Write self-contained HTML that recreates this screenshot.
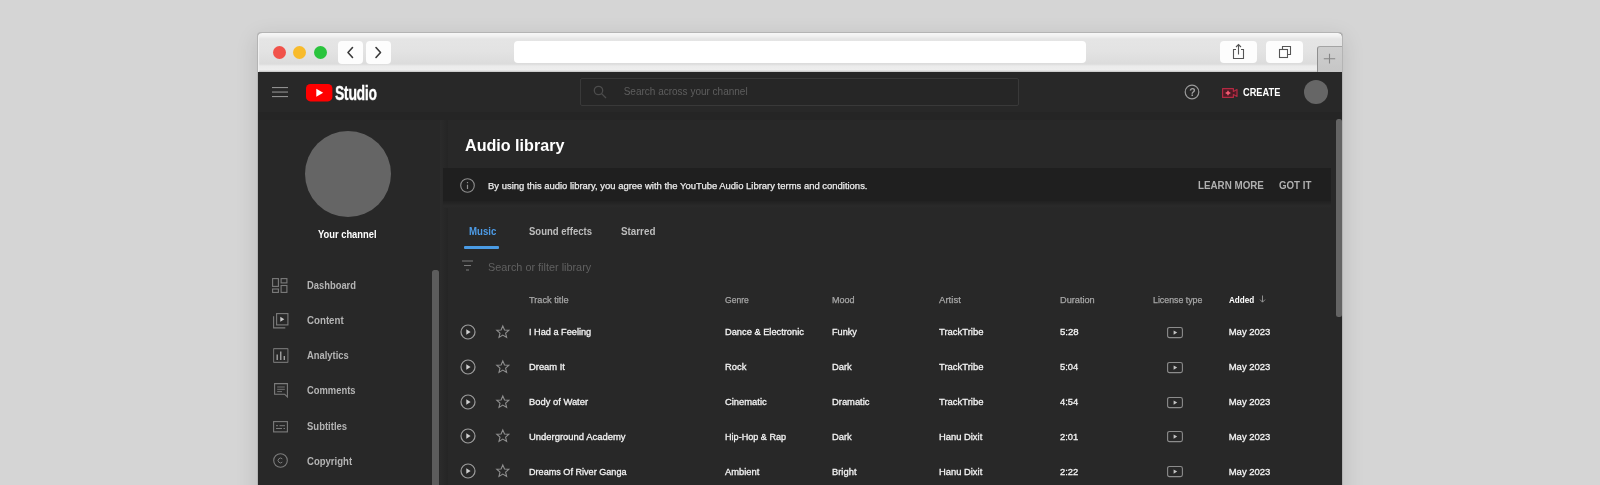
<!DOCTYPE html>
<html lang="en">
<head>
<meta charset="utf-8">
<title>Audio library - YouTube Studio</title>
<style>
html,body{margin:0;padding:0;}
body{width:1600px;height:485px;overflow:hidden;background:#d5d5d5;font-family:"Liberation Sans",sans-serif;position:relative;}
.a,.t,svg{position:absolute;}
.t{white-space:nowrap;line-height:1;transform-origin:0 50%;}
svg{overflow:visible;}
.nb{background:#fdfdfd;border-radius:4px;}
.lt{top:45.500px;width:13px;height:13px;border-radius:50%;}
</style>
</head>
<body>

<!-- window -->
<div class="a" style="left:256.600px;top:31.700px;width:1086.600px;height:473px;background:#b4b4b4;border-radius:4px 4px 0 0;box-shadow:0 6px 22px rgba(0,0,0,0.13);"></div>
<div class="a" style="left:258px;top:33px;width:1084px;height:452px;background:#282828;border-radius:4px 4px 0 0;"></div>
<!-- browser chrome -->
<div class="a" style="left:258px;top:33px;width:1084px;height:38.700px;background:linear-gradient(#f7f7f7 0,#f1f1f1 3px,#e5e5e5 6px,#e3e3e3 18px,#dcdcdc 31px,#ebebeb 33px,#eeeeee 37px,#c8c8c8 38.700px);border-radius:4px 4px 0 0;box-shadow:inset 2px 0 1px -1px #f2f2f2;"></div>
<div class="a lt" style="left:273px;background:#f1524a;"></div>
<div class="a lt" style="left:292.500px;background:#f8bb2c;"></div>
<div class="a lt" style="left:313.500px;background:#2ac43d;"></div>
<div class="a nb" style="left:338px;top:41px;width:25px;height:23px;"></div>
<div class="a nb" style="left:366px;top:41px;width:25px;height:23px;"></div>
<svg style="left:338px;top:41px;" width="53" height="23" viewBox="0 0 53 23" fill="none" stroke="#3a3a3a" stroke-width="1.6" stroke-linecap="round" stroke-linejoin="round"><path d="M14.5 6.5 L10 11.5 L14.5 16.5"/><path d="M38 6.5 L42.5 11.5 L38 16.5"/></svg>
<div class="a" style="left:513.5px;top:41px;width:572.5px;height:22px;background:#fff;border-radius:4px;"></div>
<div class="a nb" style="left:1220px;top:41px;width:37px;height:22px;"></div>
<div class="a nb" style="left:1266px;top:41px;width:37px;height:22px;"></div>
<svg style="left:1220px;top:41px;" width="83" height="22" viewBox="0 0 83 22" fill="none" stroke="#555" stroke-width="1.1"><path d="M16 8.5 H13.5 V17.5 H23.5 V8.5 H21"/><path d="M18.5 13.5 V3.5 M16 6 L18.5 3.5 L21 6"/><rect x="59.5" y="8.5" width="8" height="8"/><path d="M62.5 8.5 V5.5 H70.5 V13.5 H67.5"/></svg>
<div class="a" style="left:1317px;top:46px;width:25px;height:25.700px;background:linear-gradient(#cecece,#c6c6c6);border-left:1px solid #8f8f8f;border-top:1px solid #a4a4a4;border-radius:3px 0 0 0;box-sizing:border-box;"></div>
<svg style="left:1317px;top:46px;" width="25" height="25" viewBox="0 0 25 25" fill="none" stroke="#858585" stroke-width="1.100"><path d="M12.500 7.800 V17.600 M6.800 12.700 H18.200"/></svg>
<!-- app regions -->
<div class="a" style="left:258px;top:71.700px;width:1084px;height:40.300px;background:#282828;"></div>
<div class="a" style="left:258px;top:112px;width:185px;height:373px;background:#282828;"></div>
<div class="a" style="left:443px;top:112px;width:899px;height:373px;background:#282828;"></div>
<div class="a" style="left:258px;top:112px;width:1084px;height:8px;background:#252525;"></div>
<div class="a" style="left:440px;top:120px;width:8px;height:365px;background:linear-gradient(90deg,#2b2b2b,#252525);"></div>
<div class="a" style="left:442.500px;top:167.800px;width:888.500px;height:33px;background:#1f1f1f;"></div>
<div class="a" style="left:442.500px;top:200.800px;width:888.500px;height:7px;background:linear-gradient(#212121,#272727 50%,#2a2a2a 70%,#282828);"></div>
<!-- scrollbars -->
<div class="a" style="left:432px;top:270.300px;width:6.800px;height:215px;background:#5c5c5c;border-radius:2.500px 2.500px 0 0;"></div>
<div class="a" style="left:1336.300px;top:119px;width:5.700px;height:198px;background:#646464;border-radius:2.500px;"></div>
<!-- header -->
<svg style="left:272px;top:86px;" width="16" height="12" viewBox="0 0 16 12" fill="#909090"><rect x="0" y="1" width="16" height="1.1"/><rect x="0" y="5.5" width="16" height="1.1"/><rect x="0" y="10" width="16" height="1.1"/></svg>
<svg style="left:305.7px;top:83.5px;" width="26.4" height="17.4" viewBox="0 0 26.4 17.4"><rect x="0" y="0" width="26.4" height="17.4" rx="4.5" ry="4.5" fill="#ff0000"/><path d="M10.3 4.700 L17.2 8.700 L10.3 12.700 Z" fill="#fff"/></svg>
<div class="t" style="left:335px;top:82.5px;font-size:20.5px;font-weight:bold;color:#fff;transform-origin:0 0;transform:scaleX(0.675);letter-spacing:-0.3px;-webkit-text-stroke:0.4px #fff;will-change:transform;">Studio</div>
<div class="a" style="left:580px;top:78px;width:439px;height:28px;border:1px solid #393939;box-sizing:border-box;border-radius:2px;background:#262626;"></div>
<svg style="left:593px;top:85px;" width="14" height="14" viewBox="0 0 14 14" fill="none" stroke="#4c4c4c" stroke-width="1.3"><circle cx="5.5" cy="5.5" r="4.2"/><path d="M8.6 8.600 L13 13"/></svg>
<svg style="left:1184.3px;top:84px;" width="16" height="16" viewBox="0 0 16 16" fill="none" stroke="#9a9a9a" stroke-width="1.2"><circle cx="8" cy="8" r="6.800"/></svg>
<svg style="left:1222px;top:87.5px;" width="16" height="10" viewBox="0 0 16 10"><path d="M0.6 0.600 H11.4 V3.500 L15 1.500 V8.500 L11.4 6.500 V9.400 H0.6 Z" fill="#4f1a25" stroke="#b32a43" stroke-width="1.2" stroke-linejoin="round"/><path d="M6 2.700 V7.300 M3.700 5 H8.300" stroke="#ff6078" stroke-width="1.4" fill="none"/></svg>
<div class="a" style="left:1303.700px;top:79.600px;width:24.500px;height:24.500px;border-radius:50%;background:#666666;"></div>
<!-- sidebar -->
<div class="a" style="left:304.5px;top:130.5px;width:86px;height:86px;border-radius:50%;background:#656565;"></div>
<!-- sidebar icons -->
<svg style="left:271.8px;top:278.3px;" width="15.500" height="15" viewBox="0 0 15.500 15" fill="none" stroke="#7c7c7c" stroke-width="1.1"><rect x="0.600" y="0.600" width="5.800" height="7.800"/><rect x="9.100" y="0.600" width="5.800" height="4.300"/><rect x="0.600" y="11" width="5.800" height="3.400"/><rect x="9.100" y="7.500" width="5.800" height="6.900"/></svg>
<svg style="left:272.700px;top:312.500px;" width="15.500" height="15.500" viewBox="0 0 15.500 15.500" fill="none" stroke="#7c7c7c" stroke-width="1.1"><rect x="3.600" y="0.600" width="11.300" height="11.300"/><path d="M0.600 3.200 V14.900 H12.300"/><path d="M7.300 3.800 L11.300 6.300 L7.300 8.800 Z" fill="#c8c8c8" stroke="none"/></svg>
<svg style="left:272.500px;top:347.500px;" width="15.500" height="15" viewBox="0 0 15.500 15" fill="none" stroke="#7c7c7c" stroke-width="1.1"><path d="M0.600 0.600 H14.900 M0.600 14.400 H14.900 M0.600 0.600 V14.400 M14.900 0.600 V14.400" stroke-opacity="0.850"/><path d="M4.200 12 V6.500 M7.750 12 V3.500 M11.300 12 V8" stroke="#a0a0a0" stroke-width="1.400"/></svg>
<svg style="left:273.500px;top:383px;" width="14" height="15" viewBox="0 0 14 15" fill="none" stroke="#7c7c7c" stroke-width="1.1"><path d="M0.600 0.600 H13.400 V14 L10.600 11.200 H0.600 Z"/><path d="M3.200 4 H10.800 M3.200 6.300 H10.800 M3.200 8.600 H8" stroke-width="0.900"/></svg>
<svg style="left:273px;top:420.500px;" width="15" height="11.500" viewBox="0 0 15 11.500" fill="none" stroke="#7c7c7c" stroke-width="1.1"><rect x="0.600" y="0.600" width="13.800" height="10.300"/><path d="M3 4.700 H5 M6.500 4.700 H12 M3 7.500 H9 M10.500 7.500 H12" stroke-width="1"/></svg>
<svg style="left:273px;top:453px;" width="15" height="15" viewBox="0 0 15 15" fill="none" stroke="#7c7c7c" stroke-width="1.1"><circle cx="7.500" cy="7.500" r="6.800"/><path d="M9.300 5.900 A2.400 2.400 0 1 0 9.300 9.100" stroke-width="1"/></svg>
<!-- banner info icon -->
<svg style="left:459.500px;top:177.500px;" width="15" height="15" viewBox="0 0 15 15" fill="none" stroke="#8e8e8e" stroke-width="1.1"><circle cx="7.500" cy="7.500" r="6.800"/><path d="M7.500 6.700 V11" stroke-width="1.200"/><path d="M7.500 4 V5.200" stroke-width="1.200"/></svg>
<!-- tab underline -->
<div class="a" style="left:464px;top:246.300px;width:35px;height:3.200px;background:#4a9be4;border-radius:1px;"></div>
<!-- filter icon -->
<svg style="left:462px;top:260.300px;" width="11" height="12" viewBox="0 0 11 12" fill="none" stroke="#7a7a7a" stroke-width="1.100"><path d="M0 1 H11 M2 5.500 H9 M4 10 H7"/></svg>
<!-- sort arrow -->
<svg style="left:1259px;top:295px;" width="7" height="8" viewBox="0 0 7 8" fill="none" stroke="#9a9a9a" stroke-width="0.900"><path d="M3.500 0.500 V7 M1 4.600 L3.500 7.200 L6 4.600"/></svg>
<svg style="left:459.600px;top:324.0px;" width="16" height="16" viewBox="0 0 16 16" fill="none" stroke="#9c9c9c" stroke-width="1.2"><circle cx="8" cy="8" r="7"/><path d="M6.300 5.200 L10.600 8 L6.300 10.800 Z" fill="#d0d0d0" stroke="none"/></svg>
<svg style="left:495.8px;top:324.8px;" width="13.600" height="13.200" viewBox="0 0 15 14.500" fill="none" stroke="#8e8e8e" stroke-width="1.2" stroke-linejoin="miter"><path d="M7.500 1 L9.400 5.400 L14.200 5.800 L10.600 9 L11.700 13.600 L7.500 11.100 L3.300 13.600 L4.400 9 L0.800 5.800 L5.600 5.400 Z"/></svg>
<svg style="left:1167px;top:326.7px;" width="16" height="11.200" viewBox="0 0 16 12" preserveAspectRatio="none" fill="none" stroke="#8c8c8c" stroke-width="1.1"><rect x="0.600" y="0.600" width="14.800" height="10.800" rx="2" ry="2"/><path d="M6.600 3.800 L10.200 6 L6.600 8.200 Z" fill="#c4c4c4" stroke="none"/></svg>
<svg style="left:459.600px;top:359.0px;" width="16" height="16" viewBox="0 0 16 16" fill="none" stroke="#9c9c9c" stroke-width="1.2"><circle cx="8" cy="8" r="7"/><path d="M6.300 5.200 L10.600 8 L6.300 10.800 Z" fill="#d0d0d0" stroke="none"/></svg>
<svg style="left:495.8px;top:359.8px;" width="13.600" height="13.200" viewBox="0 0 15 14.500" fill="none" stroke="#8e8e8e" stroke-width="1.2" stroke-linejoin="miter"><path d="M7.500 1 L9.400 5.400 L14.200 5.800 L10.600 9 L11.700 13.600 L7.500 11.100 L3.300 13.600 L4.400 9 L0.800 5.800 L5.600 5.400 Z"/></svg>
<svg style="left:1167px;top:361.7px;" width="16" height="11.200" viewBox="0 0 16 12" preserveAspectRatio="none" fill="none" stroke="#8c8c8c" stroke-width="1.1"><rect x="0.600" y="0.600" width="14.800" height="10.800" rx="2" ry="2"/><path d="M6.600 3.800 L10.200 6 L6.600 8.200 Z" fill="#c4c4c4" stroke="none"/></svg>
<svg style="left:459.600px;top:393.9px;" width="16" height="16" viewBox="0 0 16 16" fill="none" stroke="#9c9c9c" stroke-width="1.2"><circle cx="8" cy="8" r="7"/><path d="M6.300 5.200 L10.600 8 L6.300 10.800 Z" fill="#d0d0d0" stroke="none"/></svg>
<svg style="left:495.8px;top:394.7px;" width="13.600" height="13.200" viewBox="0 0 15 14.500" fill="none" stroke="#8e8e8e" stroke-width="1.2" stroke-linejoin="miter"><path d="M7.500 1 L9.400 5.400 L14.200 5.800 L10.600 9 L11.700 13.600 L7.500 11.100 L3.300 13.600 L4.400 9 L0.800 5.800 L5.600 5.400 Z"/></svg>
<svg style="left:1167px;top:396.6px;" width="16" height="11.200" viewBox="0 0 16 12" preserveAspectRatio="none" fill="none" stroke="#8c8c8c" stroke-width="1.1"><rect x="0.600" y="0.600" width="14.800" height="10.800" rx="2" ry="2"/><path d="M6.600 3.800 L10.200 6 L6.600 8.200 Z" fill="#c4c4c4" stroke="none"/></svg>
<svg style="left:459.600px;top:428.0px;" width="16" height="16" viewBox="0 0 16 16" fill="none" stroke="#9c9c9c" stroke-width="1.2"><circle cx="8" cy="8" r="7"/><path d="M6.300 5.200 L10.600 8 L6.300 10.800 Z" fill="#d0d0d0" stroke="none"/></svg>
<svg style="left:495.8px;top:428.8px;" width="13.600" height="13.200" viewBox="0 0 15 14.500" fill="none" stroke="#8e8e8e" stroke-width="1.2" stroke-linejoin="miter"><path d="M7.500 1 L9.400 5.400 L14.200 5.800 L10.600 9 L11.700 13.600 L7.500 11.100 L3.300 13.600 L4.400 9 L0.800 5.800 L5.600 5.400 Z"/></svg>
<svg style="left:1167px;top:430.7px;" width="16" height="11.200" viewBox="0 0 16 12" preserveAspectRatio="none" fill="none" stroke="#8c8c8c" stroke-width="1.1"><rect x="0.600" y="0.600" width="14.800" height="10.800" rx="2" ry="2"/><path d="M6.600 3.800 L10.200 6 L6.600 8.200 Z" fill="#c4c4c4" stroke="none"/></svg>
<svg style="left:459.600px;top:463.3px;" width="16" height="16" viewBox="0 0 16 16" fill="none" stroke="#9c9c9c" stroke-width="1.2"><circle cx="8" cy="8" r="7"/><path d="M6.300 5.200 L10.600 8 L6.300 10.800 Z" fill="#d0d0d0" stroke="none"/></svg>
<svg style="left:495.8px;top:464.1px;" width="13.600" height="13.200" viewBox="0 0 15 14.500" fill="none" stroke="#8e8e8e" stroke-width="1.2" stroke-linejoin="miter"><path d="M7.500 1 L9.400 5.400 L14.200 5.800 L10.600 9 L11.700 13.600 L7.500 11.100 L3.300 13.600 L4.400 9 L0.800 5.800 L5.600 5.400 Z"/></svg>
<svg style="left:1167px;top:466.0px;" width="16" height="11.200" viewBox="0 0 16 12" preserveAspectRatio="none" fill="none" stroke="#8c8c8c" stroke-width="1.1"><rect x="0.600" y="0.600" width="14.800" height="10.800" rx="2" ry="2"/><path d="M6.600 3.800 L10.200 6 L6.600 8.200 Z" fill="#c4c4c4" stroke="none"/></svg>

<div id="txt" style="position:absolute;left:0;top:0;width:1600px;height:485px;will-change:transform;">
<div class="t" id="t0" style="left:623.70px;top:87.01px;font-size:10px;color:#5e5e5e;">Search across your channel</div>
<div class="t" id="t1" style="left:1243.00px;top:88.01px;font-size:10.2px;color:#ffffff;font-weight:bold;transform:scaleX(0.9066);">CREATE</div>
<div class="t" id="t2" style="left:1189.30px;top:87.00px;font-size:10.5px;color:#a0a0a0;font-weight:bold;">?</div>
<div class="t" id="t3" style="left:317.50px;top:230.01px;font-size:10.4px;color:#ffffff;font-weight:bold;transform:scaleX(0.8991);">Your channel</div>
<div class="t" id="t4" style="left:306.70px;top:281.01px;font-size:10.2px;color:#b4b4b4;font-weight:bold;transform:scaleX(0.9207);">Dashboard</div>
<div class="t" id="t5" style="left:306.70px;top:316.01px;font-size:10.2px;color:#b4b4b4;font-weight:bold;transform:scaleX(0.9536);">Content</div>
<div class="t" id="t6" style="left:306.70px;top:351.01px;font-size:10.2px;color:#b4b4b4;font-weight:bold;transform:scaleX(0.9206);">Analytics</div>
<div class="t" id="t7" style="left:306.70px;top:386.00px;font-size:10.2px;color:#b4b4b4;font-weight:bold;transform:scaleX(0.9211);">Comments</div>
<div class="t" id="t8" style="left:306.70px;top:422.00px;font-size:10.2px;color:#b4b4b4;font-weight:bold;transform:scaleX(0.9319);">Subtitles</div>
<div class="t" id="t9" style="left:306.70px;top:457.00px;font-size:10.2px;color:#b4b4b4;font-weight:bold;transform:scaleX(0.9374);">Copyright</div>
<div class="t" id="t10" style="left:464.60px;top:137.00px;font-size:16.4px;color:#ffffff;font-weight:bold;transform:scaleX(0.9832);">Audio library</div>
<div class="t" id="t11" style="left:488.00px;top:181.00px;font-size:9.5px;color:#ececec;transform:scaleX(0.9953);-webkit-text-stroke:0.25px #ececec;">By using this audio library, you agree with the YouTube Audio Library terms and conditions.</div>
<div class="t" id="t12" style="left:1197.60px;top:181.00px;font-size:10px;color:#b0b0b0;font-weight:bold;transform:scaleX(0.9802);">LEARN MORE</div>
<div class="t" id="t13" style="left:1279.00px;top:181.00px;font-size:10px;color:#b0b0b0;font-weight:bold;transform:scaleX(0.9717);">GOT IT</div>
<div class="t" id="t14" style="left:468.70px;top:227.00px;font-size:10.4px;color:#4d9be6;font-weight:bold;transform:scaleX(0.9269);">Music</div>
<div class="t" id="t15" style="left:528.90px;top:227.00px;font-size:10.4px;color:#bdbdbd;font-weight:bold;transform:scaleX(0.9170);">Sound effects</div>
<div class="t" id="t16" style="left:621.40px;top:227.00px;font-size:10.4px;color:#bdbdbd;font-weight:bold;transform:scaleX(0.9453);">Starred</div>
<div class="t" id="t17" style="left:488.00px;top:263.01px;font-size:10.4px;color:#606060;transform:scaleX(1.0451);">Search or filter library</div>
<div class="t" id="t18" style="left:528.80px;top:296.00px;font-size:9.1px;color:#a6a6a6;transform:scaleX(1.0134);-webkit-text-stroke:0.25px #a6a6a6;">Track title</div>
<div class="t" id="t19" style="left:724.70px;top:296.00px;font-size:9.1px;color:#a6a6a6;transform:scaleX(0.9454);-webkit-text-stroke:0.25px #a6a6a6;">Genre</div>
<div class="t" id="t20" style="left:832.00px;top:296.00px;font-size:9.1px;color:#a6a6a6;transform:scaleX(0.9934);-webkit-text-stroke:0.25px #a6a6a6;">Mood</div>
<div class="t" id="t21" style="left:938.80px;top:296.00px;font-size:9.1px;color:#a6a6a6;transform:scaleX(1.0570);-webkit-text-stroke:0.25px #a6a6a6;">Artist</div>
<div class="t" id="t22" style="left:1060.00px;top:296.00px;font-size:9.1px;color:#a6a6a6;transform:scaleX(1.0095);-webkit-text-stroke:0.25px #a6a6a6;">Duration</div>
<div class="t" id="t23" style="left:1153.00px;top:296.00px;font-size:9.1px;color:#a6a6a6;transform:scaleX(0.9674);-webkit-text-stroke:0.25px #a6a6a6;">License type</div>
<div class="t" id="t24" style="left:1228.70px;top:296.01px;font-size:9.0px;color:#ffffff;font-weight:bold;transform:scaleX(0.9036);">Added</div>
<div class="t" id="t25" style="left:528.80px;top:327.01px;font-size:9.5px;color:#f3f3f3;transform:scaleX(0.9653);-webkit-text-stroke:0.3px #f3f3f3;">I Had a Feeling</div>
<div class="t" id="t26" style="left:724.70px;top:327.01px;font-size:9.5px;color:#f3f3f3;transform:scaleX(0.9765);-webkit-text-stroke:0.3px #f3f3f3;">Dance &amp; Electronic</div>
<div class="t" id="t27" style="left:832.00px;top:327.01px;font-size:9.5px;color:#f3f3f3;transform:scaleX(0.9585);-webkit-text-stroke:0.3px #f3f3f3;">Funky</div>
<div class="t" id="t28" style="left:938.80px;top:327.01px;font-size:9.5px;color:#f3f3f3;transform:scaleX(0.9955);-webkit-text-stroke:0.3px #f3f3f3;">TrackTribe</div>
<div class="t" id="t29" style="left:1060.00px;top:327.01px;font-size:9.5px;color:#f3f3f3;transform:scaleX(1.0108);-webkit-text-stroke:0.3px #f3f3f3;">5:28</div>
<div class="t" id="t30" style="left:1228.70px;top:327.01px;font-size:9.5px;color:#f3f3f3;-webkit-text-stroke:0.3px #f3f3f3;">May 2023</div>
<div class="t" id="t31" style="left:528.80px;top:362.01px;font-size:9.5px;color:#f3f3f3;transform:scaleX(0.9866);-webkit-text-stroke:0.3px #f3f3f3;">Dream It</div>
<div class="t" id="t32" style="left:724.70px;top:362.01px;font-size:9.5px;color:#f3f3f3;transform:scaleX(0.9866);-webkit-text-stroke:0.3px #f3f3f3;">Rock</div>
<div class="t" id="t33" style="left:832.00px;top:362.01px;font-size:9.5px;color:#f3f3f3;transform:scaleX(0.9866);-webkit-text-stroke:0.3px #f3f3f3;">Dark</div>
<div class="t" id="t34" style="left:938.80px;top:362.01px;font-size:9.5px;color:#f3f3f3;transform:scaleX(0.9955);-webkit-text-stroke:0.3px #f3f3f3;">TrackTribe</div>
<div class="t" id="t35" style="left:1060.00px;top:362.01px;font-size:9.5px;color:#f3f3f3;transform:scaleX(0.9866);-webkit-text-stroke:0.3px #f3f3f3;">5:04</div>
<div class="t" id="t36" style="left:1228.70px;top:362.01px;font-size:9.5px;color:#f3f3f3;-webkit-text-stroke:0.3px #f3f3f3;">May 2023</div>
<div class="t" id="t37" style="left:528.80px;top:397.01px;font-size:9.5px;color:#f3f3f3;transform:scaleX(0.9866);-webkit-text-stroke:0.3px #f3f3f3;">Body of Water</div>
<div class="t" id="t38" style="left:724.70px;top:397.01px;font-size:9.5px;color:#f3f3f3;transform:scaleX(0.9866);-webkit-text-stroke:0.3px #f3f3f3;">Cinematic</div>
<div class="t" id="t39" style="left:832.00px;top:397.01px;font-size:9.5px;color:#f3f3f3;transform:scaleX(0.9866);-webkit-text-stroke:0.3px #f3f3f3;">Dramatic</div>
<div class="t" id="t40" style="left:938.80px;top:397.01px;font-size:9.5px;color:#f3f3f3;transform:scaleX(0.9955);-webkit-text-stroke:0.3px #f3f3f3;">TrackTribe</div>
<div class="t" id="t41" style="left:1060.00px;top:397.01px;font-size:9.5px;color:#f3f3f3;transform:scaleX(0.9866);-webkit-text-stroke:0.3px #f3f3f3;">4:54</div>
<div class="t" id="t42" style="left:1228.70px;top:397.01px;font-size:9.5px;color:#f3f3f3;-webkit-text-stroke:0.3px #f3f3f3;">May 2023</div>
<div class="t" id="t43" style="left:528.80px;top:432.00px;font-size:9.5px;color:#f3f3f3;transform:scaleX(0.9931);-webkit-text-stroke:0.3px #f3f3f3;">Underground Academy</div>
<div class="t" id="t44" style="left:724.70px;top:432.00px;font-size:9.5px;color:#f3f3f3;transform:scaleX(0.9563);-webkit-text-stroke:0.3px #f3f3f3;">Hip-Hop &amp; Rap</div>
<div class="t" id="t45" style="left:832.00px;top:432.00px;font-size:9.5px;color:#f3f3f3;transform:scaleX(0.9866);-webkit-text-stroke:0.3px #f3f3f3;">Dark</div>
<div class="t" id="t46" style="left:938.80px;top:432.00px;font-size:9.5px;color:#f3f3f3;transform:scaleX(0.9866);-webkit-text-stroke:0.3px #f3f3f3;">Hanu Dixit</div>
<div class="t" id="t47" style="left:1060.00px;top:432.00px;font-size:9.5px;color:#f3f3f3;transform:scaleX(0.9866);-webkit-text-stroke:0.3px #f3f3f3;">2:01</div>
<div class="t" id="t48" style="left:1228.70px;top:432.00px;font-size:9.5px;color:#f3f3f3;-webkit-text-stroke:0.3px #f3f3f3;">May 2023</div>
<div class="t" id="t49" style="left:528.80px;top:467.00px;font-size:9.5px;color:#f3f3f3;transform:scaleX(0.9568);-webkit-text-stroke:0.3px #f3f3f3;">Dreams Of River Ganga</div>
<div class="t" id="t50" style="left:724.70px;top:467.00px;font-size:9.5px;color:#f3f3f3;transform:scaleX(0.9866);-webkit-text-stroke:0.3px #f3f3f3;">Ambient</div>
<div class="t" id="t51" style="left:832.00px;top:467.00px;font-size:9.5px;color:#f3f3f3;transform:scaleX(0.9866);-webkit-text-stroke:0.3px #f3f3f3;">Bright</div>
<div class="t" id="t52" style="left:938.80px;top:467.00px;font-size:9.5px;color:#f3f3f3;transform:scaleX(0.9866);-webkit-text-stroke:0.3px #f3f3f3;">Hanu Dixit</div>
<div class="t" id="t53" style="left:1060.00px;top:467.00px;font-size:9.5px;color:#f3f3f3;transform:scaleX(0.9866);-webkit-text-stroke:0.3px #f3f3f3;">2:22</div>
<div class="t" id="t54" style="left:1228.70px;top:467.00px;font-size:9.5px;color:#f3f3f3;-webkit-text-stroke:0.3px #f3f3f3;">May 2023</div>
</div>
</body>
</html>
